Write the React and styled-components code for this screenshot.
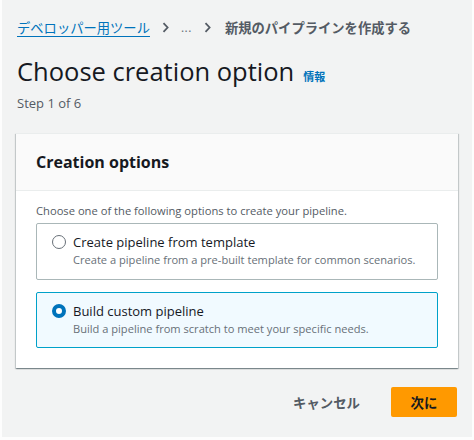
import React from 'react';
import styled, { createGlobalStyle } from 'styled-components';

const Global = createGlobalStyle`
  html, body { margin: 0; padding: 0; background: #fdfdfd; }
  body { font-family: "Open Sans", "Noto Sans CJK JP", sans-serif; }
  * { box-sizing: border-box; }
`;

const Page = styled.div`
  width: 470px;
  height: 437px;
  margin-left: 2px;
  background: #f2f3f3;
  padding: 16px 14px 0 14px;
  display: flex;
  flex-direction: column;
`;

const Crumbs = styled.nav`
  display: flex;
  align-items: center;
  gap: 12px;
  font-size: 13.3px;
  height: 22px;
  color: #545b64;
  padding-left: 1px;
`;

const CrumbLink = styled.a`
  color: #0073bb;
  text-decoration: underline;
  text-underline-offset: 3px;
`;

const Dots = styled.span`
  color: #687078;
  font-size: 12px;
  letter-spacing: 0.5px;
`;

const Current = styled.span`
  font-weight: 700;
  color: #545b64;
  margin-left: 2px;
`;

const TitleRow = styled.div`
  display: flex;
  align-items: baseline;
  gap: 9px;
  margin-top: 16px;
  padding-left: 1px;
`;

const Title = styled.h1`
  margin: 0;
  font-size: 25.5px;
  font-weight: 400;
  color: #16191f;
  line-height: 34px;
`;

const Info = styled.a`
  font-size: 11px;
  color: #0073bb;
  font-weight: 700;
`;

const Step = styled.div`
  font-size: 13px;
  line-height: 18px;
  color: #545b64;
  margin-top: 6px;
  padding-left: 1px;
`;

const Card = styled.section`
  margin: 21px 0 0 0;
  background: #fff;
  box-shadow: 0 1px 1px 0 rgba(0, 28, 36, 0.3), 1px 1px 1px 0 rgba(0, 28, 36, 0.15), -1px 1px 1px 0 rgba(0, 28, 36, 0.15);
  border-top: 1px solid #eaeded;
`;

const CardHeader = styled.div`
  background: #fafafa;
  border-bottom: 1px solid #eaeded;
  height: 57px;
  display: flex;
  align-items: center;
  padding: 0 20px;
`;

const CardTitle = styled.h2`
  margin: 0;
  font-size: 16px;
  font-weight: 700;
  color: #16191f;
`;

const CardBody = styled.div`
  padding: 12px 20px 20px 20px;
  display: flex;
  flex-direction: column;
  gap: 12px;
`;

const Hint = styled.div`
  font-size: 11.2px;
  line-height: 16px;
  color: #545b64;
  margin-bottom: -8px;
`;

const Option = styled.label`
  display: flex;
  gap: 7px;
  padding: 8px 15px;
  height: ${p => (p.$selected ? '56px' : '57px')};
  border: 1px solid ${p => (p.$selected ? '#00a1c9' : '#aab7b8')};
  background: ${p => (p.$selected ? '#f1faff' : '#fff')};
  border-radius: 2px;
`;

const Radio = styled.span`
  flex: none;
  width: 14px;
  height: 14px;
  margin-top: 3px;
  border-radius: 50%;
  border: ${p => (p.$checked ? '4px solid #0073bb' : '1.5px solid #687078')};
  background: #fff;
`;

const OptionText = styled.div`
  display: flex;
  flex-direction: column;
`;

const OptionTitle = styled.div`
  font-size: 13px;
  color: #16191f;
  line-height: 20px;
`;

const OptionDesc = styled.div`
  font-size: 11.1px;
  color: #687078;
  line-height: 16px;
`;

const Actions = styled.div`
  display: flex;
  justify-content: flex-end;
  align-items: center;
  gap: 31px;
  margin-top: 19px;
  padding-right: 1px;
`;

const TextButton = styled.button`
  border: none;
  background: none;
  font: inherit;
  font-size: 13.4px;
  font-weight: 700;
  color: #545b64;
  padding: 0;
`;

const PrimaryButton = styled.button`
  border: none;
  background: #ff9900;
  font: inherit;
  font-size: 13.4px;
  font-weight: 700;
  color: #16191f;
  width: 66px;
  height: 30px;
  border-radius: 2px;
`;

const Chevron = () => (
  <svg width="7" height="11" viewBox="0 0 7 11" fill="none">
    <path d="M1.5 1.2 L5.6 5.5 L1.5 9.8" stroke="#545b64" strokeWidth="1.8" />
  </svg>
);

const options = [
  { title: 'Create pipeline from template', desc: 'Create a pipeline from a pre-built template for common scenarios.', selected: false },
  { title: 'Build custom pipeline', desc: 'Build a pipeline from scratch to meet your specific needs.', selected: true },
];

export default function App() {
  return (
    <>
      <Global />
      <Page>
        <Crumbs>
          <CrumbLink>デベロッパー用ツール</CrumbLink>
          <Chevron />
          <Dots>...</Dots>
          <Chevron />
          <Current>新規のパイプラインを作成する</Current>
        </Crumbs>
        <TitleRow>
          <Title>Choose creation option</Title>
          <Info>情報</Info>
        </TitleRow>
        <Step>Step 1 of 6</Step>
        <Card>
          <CardHeader>
            <CardTitle>Creation options</CardTitle>
          </CardHeader>
          <CardBody>
            <Hint>Choose one of the following options to create your pipeline.</Hint>
            {options.map(o => (
              <Option key={o.title} $selected={o.selected}>
                <Radio $checked={o.selected} />
                <OptionText>
                  <OptionTitle>{o.title}</OptionTitle>
                  <OptionDesc>{o.desc}</OptionDesc>
                </OptionText>
              </Option>
            ))}
          </CardBody>
        </Card>
        <Actions>
          <TextButton>キャンセル</TextButton>
          <PrimaryButton>次に</PrimaryButton>
        </Actions>
      </Page>
    </>
  );
}
